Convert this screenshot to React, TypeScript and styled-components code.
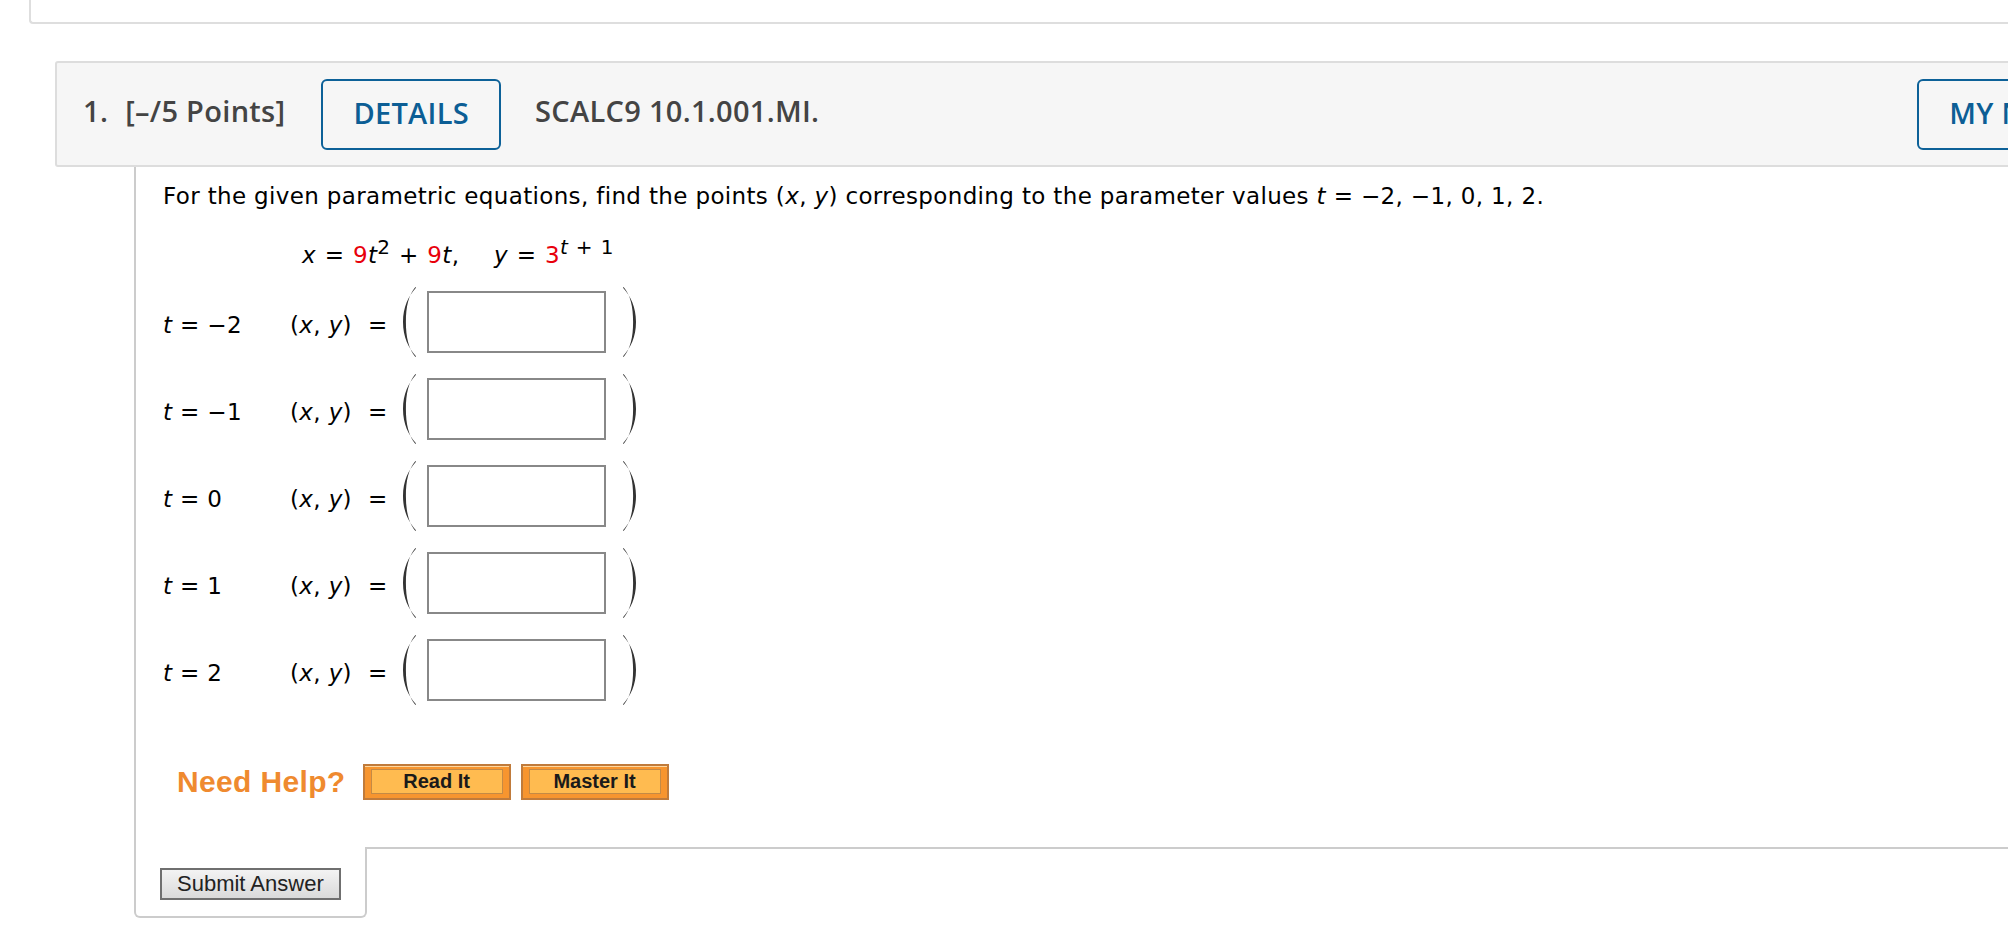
import React from 'react'
import styled, { createGlobalStyle } from 'styled-components'

const rows = ['2', '1', '0', '1', '2'].map((v, i) => (i < 2 ? '\u2212' + v : v))

export default function App() {
    return (
        <>
            <GlobalStyle />
            <TopStrip />
            <Question>
                <Header>
                    <HeadText>1.</HeadText>
                    <HeadText $gap={17}>[–/5 Points]</HeadText>
                    <OutlineButton $gap={36}>DETAILS</OutlineButton>
                    <HeadText $gap={34}>SCALC9 10.1.001.MI.</HeadText>
                    <OutlineButton $gap="auto">MY NOTES</OutlineButton>
                </Header>
                <Body>
                    <Prompt>
                        For the given parametric equations, find the points (<i>x</i>, <i>y</i>) corresponding
                        to the parameter values <i>t</i> = −2, −1, 0, 1, 2.
                    </Prompt>
                    <Equation>
                        <i>x</i> = <Red>9</Red><i>t</i><Sup>2</Sup> + <Red>9</Red><i>t</i>,{'    '}
                        <i>y</i> = <Red>3</Red><Sup><i>t</i> + 1</Sup>
                    </Equation>
                    <Rows>
                        {rows.map((v, i) => (
                            <Row key={i}>
                                <Cell $w={127}><i>t</i> = {v}</Cell>
                                <Cell $w={78}>(<i>x</i>, <i>y</i>)</Cell>
                                <Cell $w={34}>=</Cell>
                                <Paren />
                                <AnswerBox type="text" />
                                <Paren $right />
                            </Row>
                        ))}
                    </Rows>
                    <HelpRow>
                        <NeedHelp>Need Help?</NeedHelp>
                        <HelpButton><HelpInner>Read It</HelpInner></HelpButton>
                        <HelpButton $gap={10}><HelpInner>Master It</HelpInner></HelpButton>
                    </HelpRow>
                </Body>
                <Footer>
                    <SubmitTab>
                        <SubmitButton>Submit Answer</SubmitButton>
                    </SubmitTab>
                    <Filler />
                </Footer>
            </Question>
        </>
    )
}

// tall bracket drawn as a filled crescent, mirrored for the closing one
const Paren = ({ $right }: { $right?: boolean }) => (
    <ParenSvg $right={$right} width="15" height="70" viewBox="0 0 15 70">
        <path d="M14 0.8 C6.5 9 1 20 1 35 C1 50 6.5 61 14 69.2 L13.4 69.9 C6.6 62 3.9 50 3.9 35 C3.9 20 6.6 8 13.4 0.1 Z" />
    </ParenSvg>
)

const GlobalStyle = createGlobalStyle`
    html, body {
        margin: 0;
        padding: 0;
        background: #fff;
        overflow: hidden;
    }
    body {
        font-family: "Open Sans", "DejaVu Sans", sans-serif;
    }
`

const TopStrip = styled.div`
    margin-left: 29px;
    height: 22px;
    border-left: 2px solid #dedede;
    border-bottom: 2px solid #dedede;
    border-bottom-left-radius: 4px;
`

const Question = styled.section`
    margin: 37px 0 0 55px;
`

const Header = styled.header`
    box-sizing: border-box;
    width: 2104px;
    height: 106px;
    display: flex;
    align-items: center;
    padding: 0 28px 0 26px;
    background: #f6f6f6;
    border: 2px solid #dddddd;
    border-radius: 3px;
    font: 600 29px/38px "Open Sans", sans-serif;
    letter-spacing: 0.3px;
    color: #444;
`

const HeadText = styled.span<{ $gap?: number }>`
    margin-left: ${p => p.$gap ?? 0}px;
    padding-bottom: 6px;
    white-space: pre;
`

const OutlineButton = styled.button<{ $gap: number | 'auto' }>`
    margin-left: ${p => (p.$gap === 'auto' ? 'auto' : p.$gap + 'px')};
    box-sizing: border-box;
    height: 71px;
    padding: 0 30px 2px;
    border: 2px solid #0d6198;
    border-radius: 6px;
    background: transparent;
    color: #0c5e95;
    font: inherit;
    letter-spacing: inherit;
    white-space: nowrap;
`

const Body = styled.div`
    margin-left: 79px;
    border-left: 2px solid #cccccc;
    padding: 16px 0 47px 27px;
    font-family: "DejaVu Sans", Verdana, sans-serif;
    font-size: 23px;
    line-height: 27px;
    letter-spacing: 0.35px;
    color: #000;
`

const Prompt = styled.p`
    margin: 0;
`

const Equation = styled.p`
    margin: 32px 0 0 139px;
    white-space: pre;
    word-spacing: 1px;
`

const Red = styled.span`
    color: #e8000b;
`

const Sup = styled.sup`
    font-size: 20px;
    line-height: 0;
    vertical-align: 9px;
`

const Rows = styled.div`
    margin-top: 22px;
    display: flex;
    flex-direction: column;
    gap: 25px;
`

const Row = styled.div`
    display: flex;
    align-items: center;
    height: 62px;
`

const Cell = styled.span<{ $w: number }>`
    flex: none;
    width: ${p => p.$w}px;
    padding-top: 6px;
    white-space: pre;
`

const ParenSvg = styled.svg<{ $right?: boolean }>`
    flex: none;
    fill: #333;
    transform: ${p => (p.$right ? 'scaleX(-1)' : 'none')};
`

const AnswerBox = styled.input`
    box-sizing: border-box;
    flex: none;
    width: 179px;
    height: 62px;
    margin: 0 16px 0 10px;
    padding: 0 6px;
    border: 2px solid #888;
    background: #fff;
    font: inherit;
    outline: none;
`

const HelpRow = styled.div`
    margin-top: 63px;
    display: flex;
    align-items: center;
    height: 36px;
    padding-left: 14px;
`

const NeedHelp = styled.span`
    margin-right: 17px;
    font: bold 30px "Liberation Sans", Arial, sans-serif;
    color: #ef8a2f;
`

const HelpButton = styled.button<{ $gap?: number }>`
    box-sizing: border-box;
    display: flex;
    width: 148px;
    height: 36px;
    margin-left: ${p => p.$gap ?? 0}px;
    padding: 3px 6px 4px;
    border: 2px solid #c07b3b;
    background: #f7952f;
    box-shadow: inset 0 1px 0 #ffd8a0;
`

const HelpInner = styled.span`
    flex: 1;
    display: flex;
    align-items: center;
    justify-content: center;
    border: 1.5px solid #c48a45;
    background: #ffbb50;
    font: bold 20px "Liberation Sans", Arial, sans-serif;
    color: #1a1a1a;
`

const Footer = styled.div`
    margin-left: 79px;
    display: flex;
    align-items: flex-start;
`

const SubmitTab = styled.div`
    box-sizing: border-box;
    flex: none;
    width: 233px;
    height: 71px;
    padding: 21px 0 0 24px;
    border: 2px solid #cccccc;
    border-top: none;
    border-radius: 0 0 6px 6px;
`

const SubmitButton = styled.button`
    box-sizing: border-box;
    height: 32px;
    padding: 0 15px;
    border: 2px solid #6f6f6f;
    background: linear-gradient(#f3f3f3, #dadada);
    font: 22px "Liberation Sans", Arial, sans-serif;
    color: #222;
`

const Filler = styled.div`
    flex: 1;
    border-top: 2px solid #cccccc;
`
